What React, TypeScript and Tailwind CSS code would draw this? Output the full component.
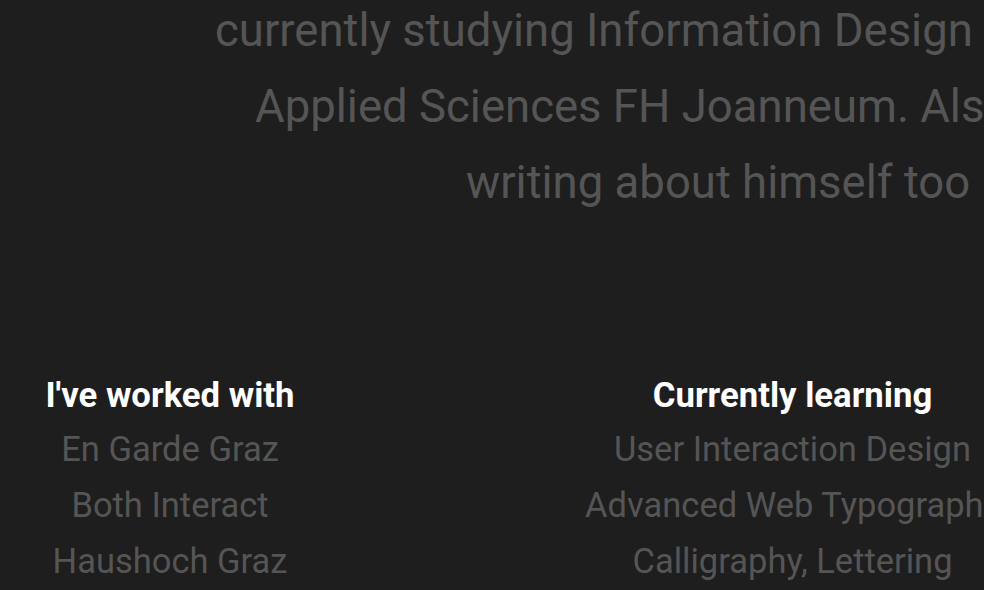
const worked = ["En Garde Graz", "Both Interact", "Haushoch Graz"];
const learning = ["User Interaction Design", "Advanced Web Typography", "Calligraphy, Lettering"];

function List({ title, items }: { title: string; items: string[] }) {
  return (
    <div className="flex flex-col items-center">
      <h3 className="whitespace-nowrap text-[34.7px] font-bold leading-[51px] text-white">{title}</h3>
      <ul className="flex flex-col items-center">
        {items.map((item) => (
          <li key={item} className="whitespace-nowrap text-[34.5px] leading-[56px] text-[#555555]">
            {item}
          </li>
        ))}
      </ul>
    </div>
  );
}

export default function App() {
  return (
    <div className="h-[590px] w-full overflow-hidden bg-[#1e1e1e] font-['Roboto',sans-serif]">
      <p className="mt-[-7.5px] text-[45.5px] leading-[76px] text-[#555555]">
        <span className="ml-[215px] block whitespace-nowrap">currently studying Information Design</span>
        <span className="ml-[255px] block whitespace-nowrap">Applied Sciences FH Joanneum. Also</span>
        <span className="ml-[466px] block whitespace-nowrap">writing about himself too</span>
      </p>
      <div className="mt-[149.5px] flex">
        <div className="w-[340px] shrink-0">
          <List title="I've worked with" items={worked} />
        </div>
        <div className="ml-[252.5px] w-[400px] shrink-0">
          <List title="Currently learning" items={learning} />
        </div>
      </div>
    </div>
  );
}
